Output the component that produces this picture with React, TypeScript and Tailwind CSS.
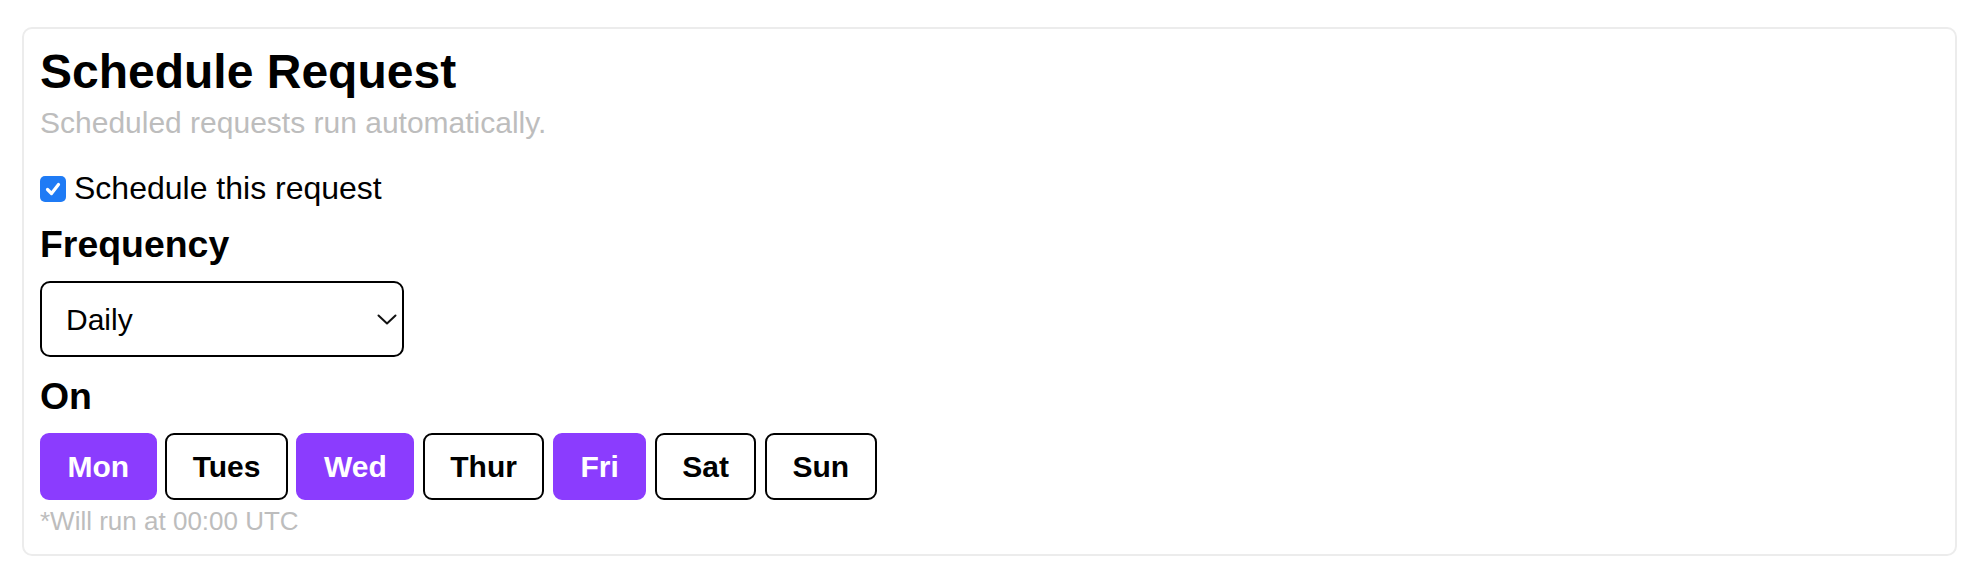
import * as React from 'react';

const DAYS = [
  { label: 'Mon', on: true },
  { label: 'Tues', on: false },
  { label: 'Wed', on: true },
  { label: 'Thur', on: false },
  { label: 'Fri', on: true },
  { label: 'Sat', on: false },
  { label: 'Sun', on: false }
];

const App: React.FC = () => {
  const [scheduled, setScheduled] = React.useState(true);
  const [frequency, setFrequency] = React.useState('daily');
  const [days, setDays] = React.useState(DAYS);

  const toggleDay = (label: string) => {
    setDays((prev) => prev.map((d) => (d.label === label ? { ...d, on: !d.on } : d)));
  };

  return (
    <div className="h-[578px] bg-white pt-[27px] pl-[22px] pr-[27px] font-['Liberation_Sans',Arial,sans-serif] text-black">
      <div className="h-[529px] rounded-[10px] border-2 border-[#ececec] px-4 pt-[15px]">
        <h1 className="text-[48px] leading-[56px] font-bold">Schedule Request</h1>
        <p className="mt-[6px] text-[30px] leading-[34px] text-[#bdbdbd]">
          Scheduled requests run automatically.
        </p>

        {/* Schedule toggle */}
        <label className="mt-[30px] flex items-center gap-2 text-[32px] leading-[37px] cursor-pointer">
          <button
            type="button"
            onClick={() => setScheduled(!scheduled)}
            className={`flex h-[26px] w-[26px] items-center justify-center rounded-[5px] ${
              scheduled ? 'bg-[#1f7bf5]' : 'border-2 border-[#767676] bg-white'
            }`}
          >
            {scheduled && (
              <svg width="18" height="18" viewBox="0 0 18 18" fill="none">
                <path d="M3.5 9.5 L7.5 13.5 L14.5 4.5" stroke="white" strokeWidth="3.2" strokeLinecap="round" strokeLinejoin="round" />
              </svg>
            )}
          </button>
          <span>Schedule this request</span>
        </label>

        {/* Frequency */}
        <h3 className="mt-[16px] text-[37.44px] leading-[43px] font-bold">Frequency</h3>
        <div className="relative mt-[15px] w-[364px]">
          <select
            value={frequency}
            onChange={(e) => setFrequency(e.target.value)}
            className="h-[76px] w-full appearance-none rounded-[10px] border-2 border-black bg-white pl-[24px] text-[30px] text-black outline-none"
          >
            <option value="daily">Daily</option>
            <option value="weekly">Weekly</option>
            <option value="monthly">Monthly</option>
          </select>
          <svg
            className="pointer-events-none absolute right-[7px] top-[33px]"
            width="20"
            height="11"
            viewBox="0 0 20 11"
            fill="none"
          >
            <path d="M1.5 1.5 L10 9.5 L18.5 1.5" stroke="#111" strokeWidth="2" strokeLinecap="round" strokeLinejoin="round" />
          </svg>
        </div>

        {/* Days */}
        <h3 className="mt-[18px] text-[37.44px] leading-[43px] font-bold">On</h3>
        <div className="mt-[15px] flex gap-[8.5px]">
          {days.map((d) => (
            <button
              key={d.label}
              type="button"
              onClick={() => toggleDay(d.label)}
              className={`h-[67px] rounded-[9px] border-2 px-[25.5px] text-[30px] font-bold ${
                d.on ? 'border-[#8b3cfe] bg-[#8b3cfe] text-white' : 'border-black bg-white text-black'
              }`}
            >
              {d.label}
            </button>
          ))}
        </div>
        <p className="mt-[6px] text-[26px] leading-[30px] text-[#bdbdbd]">*Will run at 00:00 UTC</p>
      </div>
    </div>
  );
};

export default App;
